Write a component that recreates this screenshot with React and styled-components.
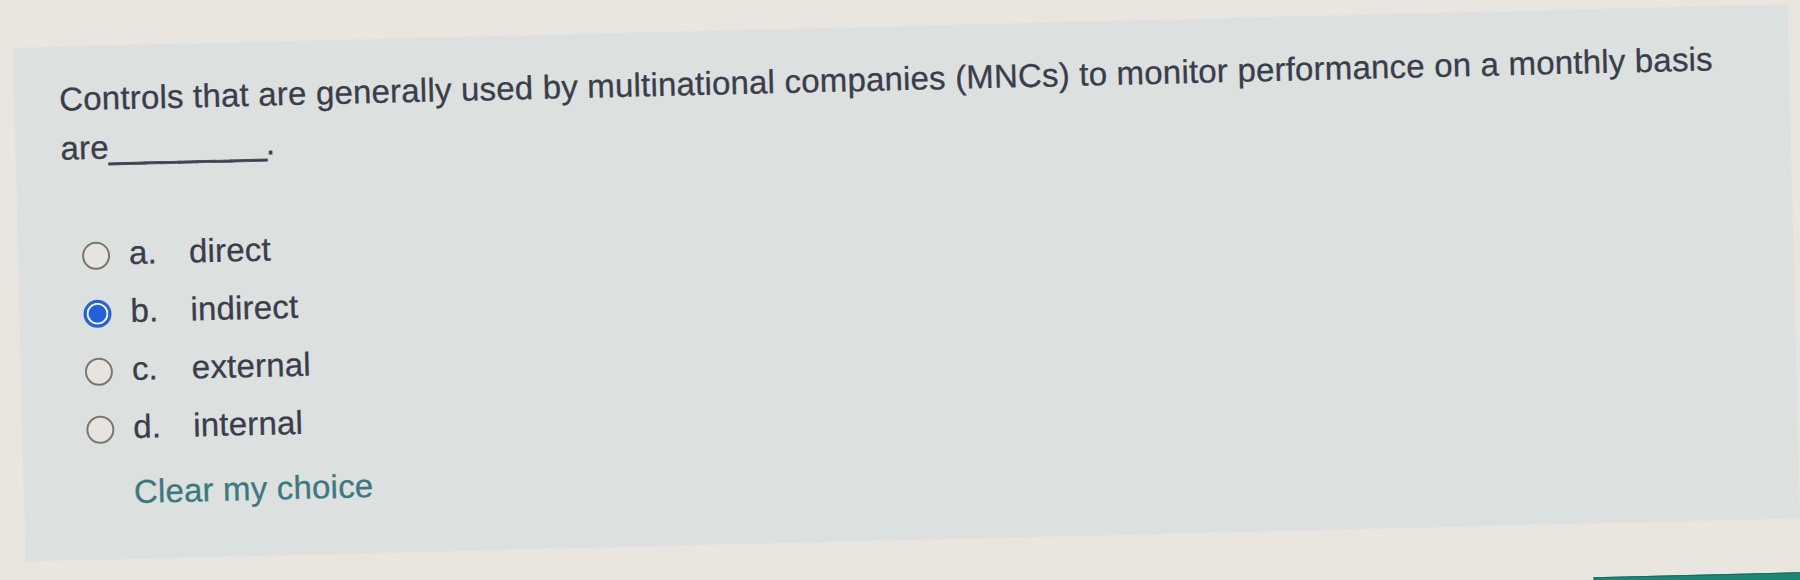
import React, { useState } from "react";
import styled, { createGlobalStyle } from "styled-components";

const GlobalStyle = createGlobalStyle`
  html, body {
    margin: 0;
    padding: 0;
    background: #e9e5df;
  }
  body {
    font-family: "Liberation Sans", Arial, Helvetica, sans-serif;
    overflow: hidden;
    height: 580px;
  }
`;

const Sheet = styled.div`
  width: 1800px;
  height: 580px;
  box-sizing: border-box;
  padding: 26px 0 0 19px;
  transform: rotate(-1.4deg);
  transform-origin: 907px 283px;
`;

const Panel = styled.section`
  width: 1775px;
  height: 514px;
  box-sizing: border-box;
  padding: 28px 45px 0 45px;
  background: #dce1df;
  color: #3a3d4b;
  -webkit-text-stroke: 0.3px #3a3d4b;
`;

const Question = styled.p`
  margin: 0;
  font-size: 33px;
  line-height: 49px;
  letter-spacing: 0.2px;
`;

const Blank = styled.span`
  letter-spacing: -0.9px;
  -webkit-text-stroke: 0.8px #4a4d5a;
`;

const Answers = styled.div`
  margin: 52px 0 0 19px;
  display: flex;
  flex-direction: column;
`;

const Option = styled.label`
  display: flex;
  align-items: center;
  height: 58px;
  font-size: 33px;
  line-height: 49px;
  letter-spacing: 0.2px;
  cursor: pointer;
`;

const Radio = styled.input.attrs({ type: "radio" })`
  appearance: none;
  -webkit-appearance: none;
  box-sizing: border-box;
  width: 28px;
  height: 28px;
  margin: 5px 19px 0 0;
  border-radius: 50%;
  border: 2.5px solid #7a7671;
  background: #e7e3de;
  flex: none;
  cursor: pointer;

  &:checked {
    border: 3px solid #2b63d6;
    background: #2262d9;
    box-shadow: inset 0 0 0 2px #f4f6fb;
  }
`;

const Letter = styled.span`
  width: 60px;
  flex: none;
`;

const Clear = styled.a`
  display: inline-block;
  margin: 12px 0 0 65px;
  font-size: 33px;
  line-height: 49px;
  letter-spacing: 0.2px;
  color: #3b7880;
  -webkit-text-stroke: 0.3px #3b7880;
  text-decoration: none;
  cursor: pointer;
`;

const ButtonRow = styled.div`
  width: 1775px;
  margin-top: 54px;
  display: flex;
  justify-content: flex-end;
`;

const NextButton = styled.button`
  width: 208px;
  height: 52px;
  border: none;
  border-top: 1px solid #176b5e;
  background: #1f8574;
`;

const options = [
  { key: "a", text: "direct" },
  { key: "b", text: "indirect" },
  { key: "c", text: "external" },
  { key: "d", text: "internal" },
];

export default function App() {
  const [choice, setChoice] = useState("b");
  return (
    <>
      <GlobalStyle />
      <Sheet>
        <Panel>
          <Question>
            Controls that are generally used by multinational companies (MNCs) to monitor
            performance on a monthly basis are<Blank>_________</Blank>.
          </Question>
          <Answers>
            {options.map((o) => (
              <Option key={o.key}>
                <Radio
                  name="q1"
                  checked={choice === o.key}
                  onChange={() => setChoice(o.key)}
                />
                <Letter>{o.key}.</Letter>
                {o.text}
              </Option>
            ))}
          </Answers>
          <Clear onClick={() => setChoice(null)}>Clear my choice</Clear>
        </Panel>
        <ButtonRow>
          <NextButton aria-label="Next page" />
        </ButtonRow>
      </Sheet>
    </>
  );
}
